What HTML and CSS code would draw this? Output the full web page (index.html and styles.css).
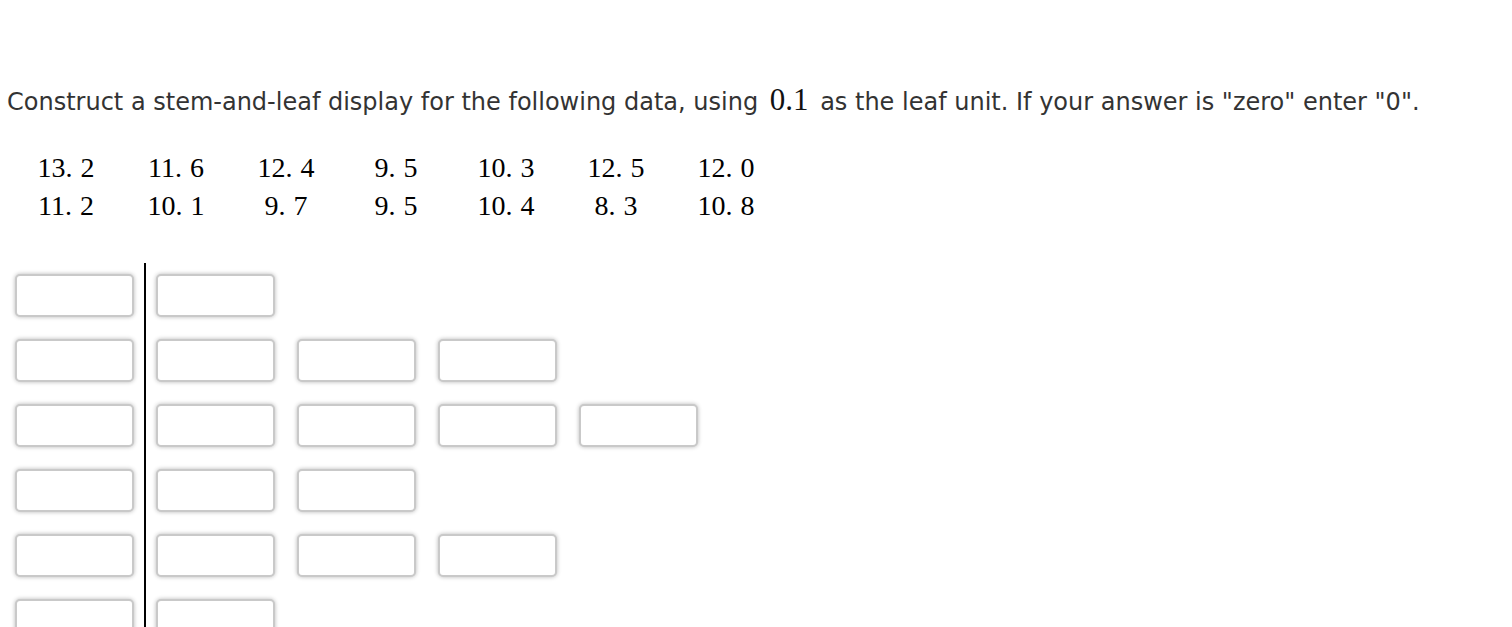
FILE: index.html
```html
<!DOCTYPE html>
<html>
<head>
<meta charset="utf-8">
<link rel="stylesheet" href="styles.css">
</head>
<body>
<p class="prompt">Construct a stem-and-leaf display for the following data, using <span class="math">0.1</span> as the leaf unit. If your answer is "zero" enter "0".</p>
<div class="data">
  <span>13.<i>2</i></span><span>11.<i>6</i></span><span>12.<i>4</i></span><span>9.<i>5</i></span><span>10.<i>3</i></span><span>12.<i>5</i></span><span>12.<i>0</i></span>
  <span>11.<i>2</i></span><span>10.<i>1</i></span><span>9.<i>7</i></span><span>9.<i>5</i></span><span>10.<i>4</i></span><span>8.<i>3</i></span><span>10.<i>8</i></span>
</div>
<div class="plot">
  <div class="stems">
    <input class="box" type="text">
    <input class="box" type="text">
    <input class="box" type="text">
    <input class="box" type="text">
    <input class="box" type="text">
    <input class="box" type="text">
  </div>
  <div class="leaves">
    <div class="row"><input class="box" type="text"></div>
    <div class="row"><input class="box" type="text"><input class="box" type="text"><input class="box" type="text"></div>
    <div class="row"><input class="box" type="text"><input class="box" type="text"><input class="box" type="text"><input class="box" type="text"></div>
    <div class="row"><input class="box" type="text"><input class="box" type="text"></div>
    <div class="row"><input class="box" type="text"><input class="box" type="text"><input class="box" type="text"></div>
    <div class="row"><input class="box" type="text"></div>
  </div>
</div>
</body>
</html>
```
FILE: styles.css
```css
html, body {
  margin: 0;
  padding: 0;
  background: #fff;
}
body {
  font-family: "DejaVu Sans", Verdana, sans-serif;
  color: #333;
}
.prompt {
  margin: 0;
  padding: 86px 0 0 7px;
  font-size: 24px;
  line-height: 28px;
}
.math {
  font-family: "Liberation Serif", "Times New Roman", serif;
  font-size: 31px;
  margin: 0 4px 0 4px;
  color: #111;
}
.data {
  display: grid;
  grid-template-columns: repeat(7, 110px);
  margin: 33px 0 0 11px;
  font-family: "Liberation Serif", "Times New Roman", serif;
  font-size: 28px;
  line-height: 38px;
  color: #000;
}
.data span {
  text-align: center;
}
.data i {
  font-style: normal;
  margin-left: 8px;
}
.plot {
  display: flex;
  margin-top: 38px;
  align-items: flex-start;
}
.stems {
  display: flex;
  flex-direction: column;
  gap: 22px;
  padding: 11px 10px 0 15px;
  border-right: 2px solid #000;
}
.leaves {
  display: flex;
  flex-direction: column;
  gap: 22px;
  padding: 11px 0 0 10px;
}
.row {
  display: flex;
  gap: 22px;
}
.box {
  box-sizing: border-box;
  width: 119px;
  height: 43px;
  margin: 0;
  padding: 0;
  background: #fff;
  border: 2px solid #c9c9c9;
  border-radius: 5px;
  box-shadow: 0 0 4px rgba(0, 0, 0, 0.28);
  outline: none;
}
```
